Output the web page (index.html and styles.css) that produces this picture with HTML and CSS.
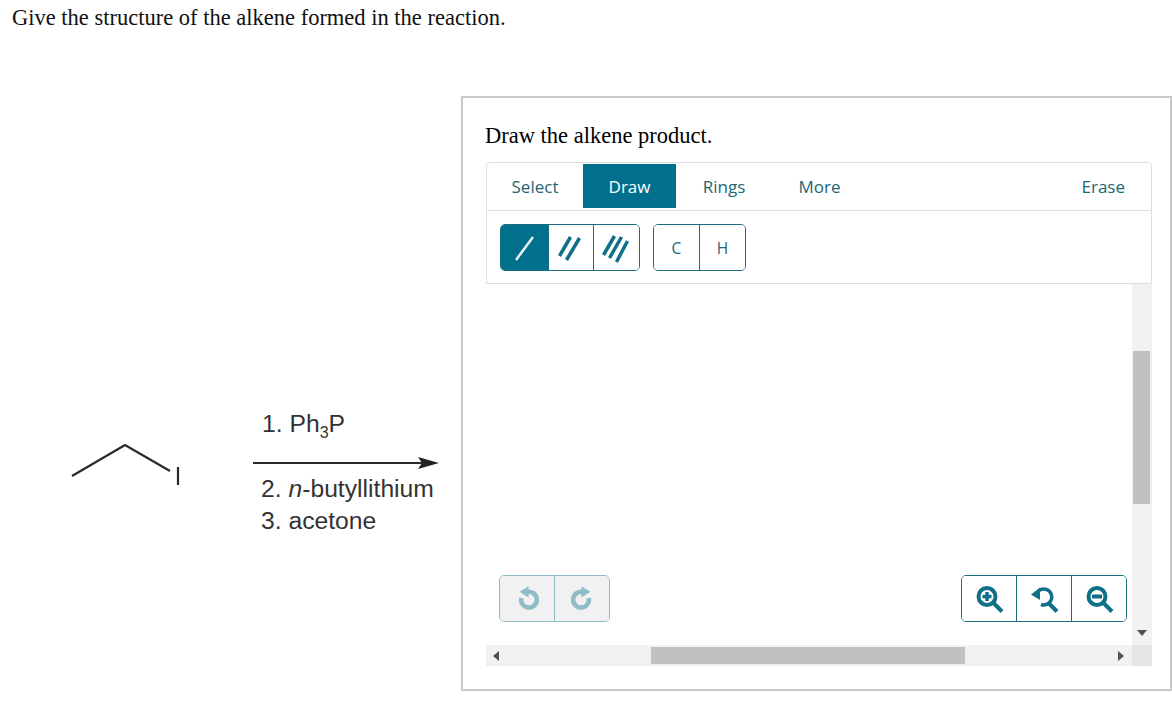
FILE: index.html
```html
<!DOCTYPE html>
<html lang="en">
<head>
  <meta charset="UTF-8">
  <title>Give the structure of the alkene</title>
  <link rel="stylesheet" href="styles.css">
</head>
<body>
  <p class="question">Give the structure of the alkene formed in the reaction.</p>

  <div class="content">
    <div class="scheme">
      <svg class="molecule" width="112" height="46" viewBox="0 0 112 46">
        <path d="M1 32 L54 1 L99 27" fill="none" stroke="#2a2a2a" stroke-width="2.2"/>
        <path d="M107 23 V41" fill="none" stroke="#2a2a2a" stroke-width="2.2"/>
      </svg>
      <div class="reagents">
        <div class="reagent reagent-top">1. Ph<sub>3</sub>P</div>
        <svg class="arrow" width="186" height="14" viewBox="0 0 186 14">
          <path d="M0 7 H170" stroke="#2a2a2a" stroke-width="2"/>
          <path d="M165 1 L186 7 L165 13 L169 7 Z" fill="#222"/>
        </svg>
        <div class="reagent reagent-second">2. <i>n</i>-butyllithium</div>
        <div class="reagent reagent-third">3. acetone</div>
      </div>
    </div>

    <div class="panel">
      <h2 class="panel-title">Draw the alkene product.</h2>

      <div class="tabs">
        <span class="tab tab-select">Select</span>
        <span class="tab tab-draw active">Draw</span>
        <span class="tab tab-rings">Rings</span>
        <span class="tab tab-more">More</span>
        <span class="tab tab-erase">Erase</span>
      </div>

      <div class="tools">
        <div class="btn-group">
          <button class="btn btn-bond active">
            <svg width="24" height="30" viewBox="0 0 24 30"><path d="M3 27 L20 4" stroke="#e8f3f5" stroke-width="2.5"/></svg>
          </button>
          <button class="btn btn-bond">
            <svg width="30" height="30" viewBox="0 0 30 30"><path d="M3.5 23 L14.5 4 M10.5 27 L23.5 5" stroke="#0f7088" stroke-width="3.5"/></svg>
          </button>
          <button class="btn btn-bond">
            <svg width="32" height="32" viewBox="0 0 32 32"><path d="M2.5 23 L13.5 4 M8.5 26 L20.5 5 M15.5 30 L26.5 9" stroke="#0f7088" stroke-width="3.5"/></svg>
          </button>
        </div>
        <div class="btn-group">
          <button class="btn btn-atom">C</button>
          <button class="btn btn-atom">H</button>
        </div>
      </div>

      <div class="canvas-row">
        <div class="canvas">
          <div class="btn-group btn-group-off">
            <button class="btn btn-action">
              <svg width="27" height="27" viewBox="0 0 24 24"><path d="M6.5 11.5 A7 7 0 1 0 11 6.5" fill="none" stroke="#8fbcc6" stroke-width="4"/><path d="M13 1 V11 L5 6 Z" fill="#8fbcc6"/></svg>
            </button>
            <button class="btn btn-action">
              <svg width="27" height="27" viewBox="0 0 24 24"><path d="M17.5 11.5 A7 7 0 1 1 13 6.5" fill="none" stroke="#8fbcc6" stroke-width="4"/><path d="M11 1 V11 L19 6 Z" fill="#8fbcc6"/></svg>
            </button>
          </div>
          <div class="btn-group">
            <button class="btn btn-action">
              <svg width="30" height="30" viewBox="0 0 30 30"><circle cx="13" cy="12.5" r="8.5" fill="none" stroke="#0f7088" stroke-width="4"/><path d="M8.5 12.5 H17.5 M13 8 V17" stroke="#0f7088" stroke-width="3.5"/><path d="M19.5 19 L28 27.5" stroke="#0f7088" stroke-width="4"/></svg>
            </button>
            <button class="btn btn-action">
              <svg width="30" height="30" viewBox="0 0 30 30"><path d="M10 6.5 A8 8 0 1 1 12 20.5" fill="none" stroke="#0f7088" stroke-width="3.5"/><path d="M11 3.5 L11 16 L2 10.5 Z" fill="#0f7088"/><path d="M20 19.5 L28 27.5" stroke="#0f7088" stroke-width="4"/></svg>
            </button>
            <button class="btn btn-action">
              <svg width="30" height="30" viewBox="0 0 30 30"><circle cx="13" cy="12.5" r="8.5" fill="none" stroke="#0f7088" stroke-width="4"/><path d="M8 12.5 H18" stroke="#0f7088" stroke-width="4"/><path d="M19.5 19 L28 27.5" stroke="#0f7088" stroke-width="4"/></svg>
            </button>
          </div>
        </div>
        <div class="vscroll">
          <div class="vscroll-thumb"></div>
          <span class="arrow-down"></span>
        </div>
      </div>

      <div class="hscroll">
        <span class="arrow-left"></span>
        <div class="hscroll-thumb"></div>
        <span class="arrow-right"></span>
        <div class="scroll-corner"></div>
      </div>
    </div>
  </div>
</body>
</html>
```

FILE: styles.css
```css
body {
  margin: 0;
  background: white;
  font-family: "Liberation Serif", serif;
  color: #111;
}
.question {
  margin: 0;
  padding: 6px 12px 0;
  height: 96px;
  box-sizing: border-box;
  font-size: 22.5px;
  line-height: 24px;
}
.content {
  display: flex;
}

/* reaction on the left */
.scheme {
  width: 461px;
  height: 595px;
  display: flex;
  box-sizing: border-box;
  padding: 0 0 0 71px;
}
.molecule {
  margin-top: 348px;
  flex: none;
}
.reagents {
  margin: 312px 0 0 70px;
  width: 186px;
  font-family: "Liberation Sans", sans-serif;
  font-size: 24.7px;
  color: #333;
}
.reagent {
  line-height: 32px;
  white-space: nowrap;
}
.reagent sub {
  font-size: 16px;
  line-height: 0;
  vertical-align: -6px;
}
.reagent-top {
  padding-left: 9px;
}
.reagent-second {
  padding-left: 8px;
  margin-top: 3px;
}
.reagent-third {
  padding-left: 8px;
}
.arrow {
  display: block;
  margin-top: 16px;
}

/* drawing panel */
.panel {
  width: 711px;
  height: 595px;
  box-sizing: border-box;
  border: 2px solid #c9c9c9;
  padding: 0 18px 0 22px;
}
.panel-title {
  margin: 24px 0 12px;
  font-size: 22.5px;
  line-height: 28px;
  font-weight: normal;
  color: #000;
}
.tabs {
  display: flex;
  align-items: flex-start;
  height: 49px;
  box-sizing: border-box;
  margin-left: 1px;
  padding-top: 1px;
  border: 1px solid #dedede;
  border-radius: 4px 4px 0 0;
  font-family: "Open Sans", sans-serif;
  font-size: 17px;
  color: #1d6673;
}
.tab {
  height: 44px;
  line-height: 46px;
  text-align: center;
  box-sizing: border-box;
}
.tab-select {
  width: 96px;
}
.tab-draw {
  width: 93px;
}
.tab-rings {
  width: 96px;
}
.tab-more {
  width: 95px;
}
.tab-erase {
  margin-left: auto;
  padding-right: 26px;
}
.tab.active {
  background: #00708c;
  color: white;
}
.tools {
  display: flex;
  gap: 13px;
  height: 73px;
  box-sizing: border-box;
  margin-left: 1px;
  padding: 13px 13px;
  border: 1px solid #dedede;
  border-top: 0;
}
.btn-group {
  display: flex;
  height: 47px;
  box-sizing: border-box;
  border: 1px solid #1a6c80;
  border-radius: 5px;
  overflow: hidden;
  background: white;
}
.btn {
  display: flex;
  align-items: center;
  justify-content: center;
  height: 100%;
  padding: 0;
  border: 0;
  border-left: 1px solid #1a6c80;
  background: white;
  font-family: "Open Sans", sans-serif;
  font-size: 15.5px;
  color: #1d6673;
}
.btn:first-child {
  border-left: 0;
}
.btn.active {
  background: #00708c;
}
.btn-bond {
  width: 46px;
}
.btn-bond.active {
  width: 47px;
}
.btn-bond:nth-child(2) {
  width: 45px;
}
.btn-atom {
  width: 46px;
}
.btn-atom:first-child {
  width: 45px;
}
.btn-action {
  width: 55px;
}
.btn-action:first-child {
  width: 54px;
}
.canvas-row {
  display: flex;
  height: 361px;
  margin-left: 1px;
}
.canvas {
  flex: 1;
  display: flex;
  justify-content: space-between;
  align-items: flex-end;
  padding: 0 5px 23px 13px;
}
.btn-group-off {
  border-color: #8fbcc6;
  background: #f1f1f1;
}
.btn-group-off .btn {
  background: #f1f1f1;
  border-color: #8fbcc6;
}
.vscroll {
  position: relative;
  width: 20px;
  background: #f1f1f1;
}
.vscroll-thumb {
  width: 17px;
  height: 153px;
  margin: 67px 0 0 1px;
  background: #c1c1c1;
}
.arrow-down {
  position: absolute;
  left: 5px;
  bottom: 9px;
  border: 5px solid transparent;
  border-top: 6px solid #505050;
  border-bottom: 0;
}
.hscroll {
  display: flex;
  align-items: center;
  height: 21px;
  margin-left: 1px;
  background: #f1f1f1;
}
.arrow-left {
  margin-left: 7px;
  border: 5px solid transparent;
  border-right: 6px solid #505050;
  border-left: 0;
}
.hscroll-thumb {
  width: 314px;
  height: 17px;
  margin-left: 152px;
  background: #c1c1c1;
}
.arrow-right {
  margin-left: 153px;
  border: 5px solid transparent;
  border-left: 6px solid #505050;
  border-right: 0;
}
.scroll-corner {
  width: 20px;
  height: 21px;
  margin-left: auto;
  background: #e6e6e6;
}
```
